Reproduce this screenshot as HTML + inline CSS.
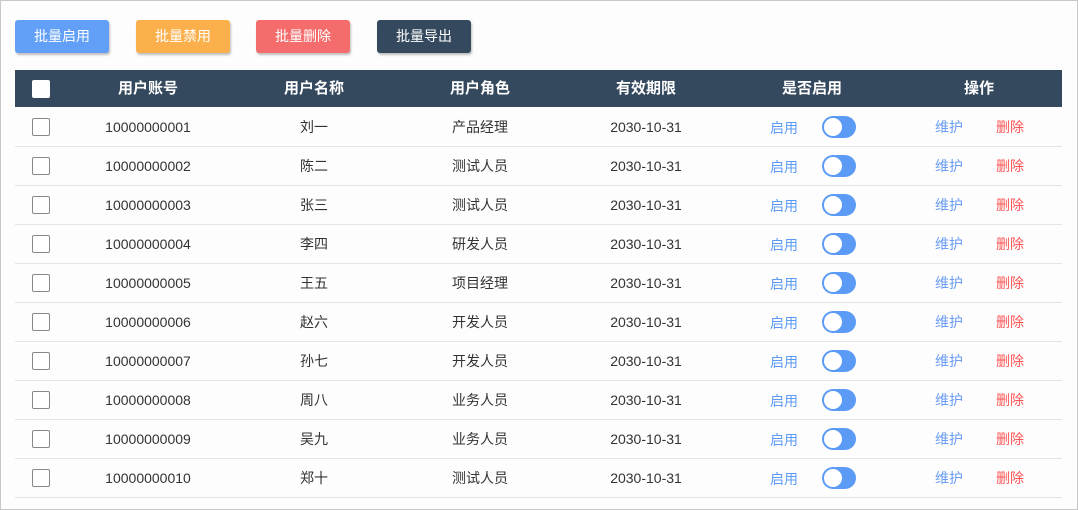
<!DOCTYPE html>
<html><head><meta charset="utf-8"><style>
body{margin:0;width:1078px;height:510px;background:#fff;font-family:"Liberation Sans","Noto Sans CJK SC",sans-serif;overflow:hidden}
.frame{position:absolute;left:0;top:0;width:1076px;height:508px;border:1px solid #c8c8c8;background:#fdfdfd}
.btn{position:absolute;top:20px;height:33px;width:94px;border-radius:3px;color:#fff;font-size:14px;line-height:33px;text-align:center;box-shadow:1px 2px 2px rgba(0,0,0,.25)}
.hdr{position:absolute;left:15px;top:70px;width:1047px;height:37px;line-height:37px;background:#34495e;color:#fff;font-weight:bold;font-size:15px}
.c{position:absolute;top:0;transform:translateX(-50%);white-space:nowrap}
.row{position:absolute;left:15px;width:1047px;height:38px;line-height:38px;border-bottom:1px solid #e4e4e4;font-size:14px;color:#333}
.cb{position:absolute;left:17px;width:16px;height:16px;border:1px solid #888;border-radius:2px;background:#fff}
.tg{position:absolute;left:807px;top:8px;width:34px;height:22px;border-radius:11px;background:#5c9bf5}
.tg i{position:absolute;left:2px;top:2px;width:18px;height:18px;border-radius:50%;background:#fff}
</style></head><body><div class="frame"></div>
<div class="btn" style="left:15px;background:#62a0f8">批量启用</div>
<div class="btn" style="left:136px;background:#fbb04c">批量禁用</div>
<div class="btn" style="left:256px;background:#f56c6c">批量删除</div>
<div class="btn" style="left:377px;background:#34495e">批量导出</div>
<div class="hdr">
<div class="cb" style="top:10px;border-color:#fff"></div>
<span class="c" style="left:133px">用户账号</span>
<span class="c" style="left:299px">用户名称</span>
<span class="c" style="left:465px">用户角色</span>
<span class="c" style="left:631px">有效期限</span>
<span class="c" style="left:797px">是否启用</span>
<span class="c" style="left:964px">操作</span>
</div>
<div id="rows"></div>
<script>
var d=[["刘一","产品经理"],["陈二","测试人员"],["张三","测试人员"],["李四","研发人员"],["王五","项目经理"],["赵六","开发人员"],["孙七","开发人员"],["周八","业务人员"],["吴九","业务人员"],["郑十","测试人员"]];
var h="";
d.forEach(function(r,i){var n=("0"+(i+1)).slice(-2);
h+='<div class="row" style="top:'+(108+i*39)+'px"><div class="cb" style="top:10px"></div>'+
'<span class="c" style="left:133px">100000000'+n+'</span>'+
'<span class="c" style="left:299px">'+r[0]+'</span>'+
'<span class="c" style="left:465px">'+r[1]+'</span>'+
'<span class="c" style="left:631px">2030-10-31</span>'+
'<span class="c" style="left:769px;top:1px;color:#5c9bf5">启用</span><div class="tg"><i></i></div>'+
'<span class="c" style="left:934px;color:#6a9cf5">维护</span>'+
'<span class="c" style="left:995px;color:#f55">删除</span></div>';});
document.getElementById("rows").innerHTML=h;
</script>
</body></html>
